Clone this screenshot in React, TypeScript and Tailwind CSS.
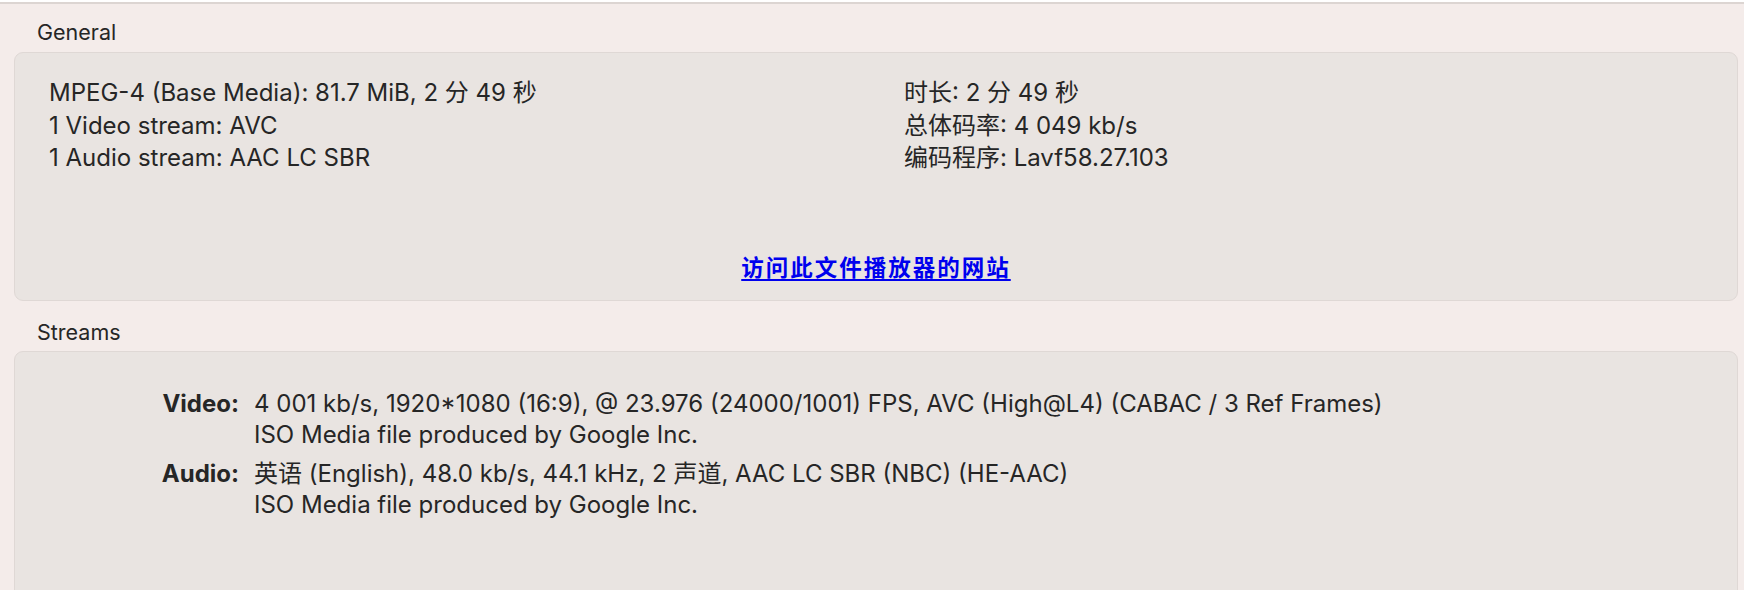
const font = { fontFamily: 'Inter, "Noto Sans CJK SC", sans-serif' }

const summary = [
  'MPEG-4 (Base Media): 81.7 MiB, 2 分 49 秒',
  '1 Video stream: AVC',
  '1 Audio stream: AAC LC SBR',
]

const details = ['时长: 2 分 49 秒', '总体码率: 4 049 kb/s', '编码程序: Lavf58.27.103']

const streams = [
  {
    label: 'Video:',
    lines: [
      '4 001 kb/s, 1920*1080 (16:9), @ 23.976 (24000/1001) FPS, AVC (High@L4) (CABAC / 3 Ref Frames)',
      'ISO Media file produced by Google Inc.',
    ],
  },
  {
    label: 'Audio:',
    lines: [
      '英语 (English), 48.0 kb/s, 44.1 kHz, 2 声道, AAC LC SBR (NBC) (HE-AAC)',
      'ISO Media file produced by Google Inc.',
    ],
  },
]

export default function App() {
  return (
    <div
      className="w-[1744px] h-[590px] overflow-hidden bg-[#f4ecea] text-[#262626] border-t-[2px] border-[#dcd5d2] mt-[2px] antialiased"
      style={font}
    >
      <div className="pl-[14px] pr-[6px]">
        {/* General */}
        <div className="pl-[23px] pt-[15px] pb-[7px] text-[21.5px] leading-[26px]">General</div>
        <div className="h-[249px] rounded-[9px] border border-[#dfd8d5] bg-[#e9e4e1] flex flex-col">
          <div className="grid grid-cols-[855px_1fr] pl-[34px] pt-[24px] text-[24px] leading-[32.5px]">
            <div>
              {summary.map((line) => (
                <div key={line}>{line}</div>
              ))}
            </div>
            <div>
              {details.map((line) => (
                <div key={line}>{line}</div>
              ))}
            </div>
          </div>
          <div className="mt-auto pb-[16px] text-center">
            <a href="#" className="text-[22.5px] leading-[32px] font-bold text-[#0000ee] underline underline-offset-[3px] tracking-[2px]">
              访问此文件播放器的网站
            </a>
          </div>
        </div>

        {/* Streams */}
        <div className="pl-[23px] pt-[18px] pb-[6px] text-[21.5px] leading-[26px]">Streams</div>
        <div className="h-[260px] rounded-t-[9px] border border-[#dfd8d5] bg-[#e9e4e1] pt-[36px]">
          <div className="flex flex-col gap-[8px] text-[24px] leading-[31px]">
            {streams.map((s) => (
              <div key={s.label} className="flex">
                <div className="w-[239px] shrink-0 pr-[15px] text-right font-bold">{s.label}</div>
                <div>
                  {s.lines.map((line) => (
                    <div key={line}>{line}</div>
                  ))}
                </div>
              </div>
            ))}
          </div>
        </div>
      </div>
    </div>
  )
}
